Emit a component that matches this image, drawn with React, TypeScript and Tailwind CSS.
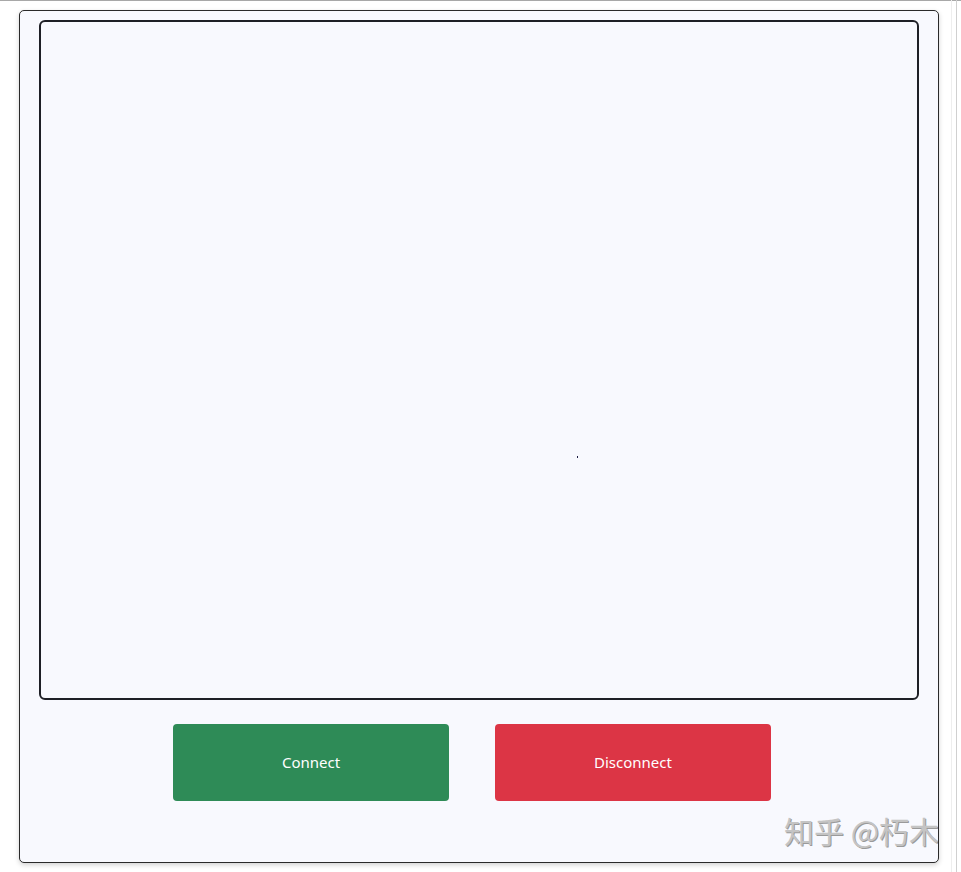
import React from "react";

export default function App() {
  return (
    <div className="relative w-[961px] h-[872px] bg-white overflow-hidden" style={{ fontFamily: '"Noto Sans", "Noto Sans CJK SC", sans-serif' }}>
      <div className="h-px w-full bg-[#a8a8a8]" />
      <div className="absolute right-[4px] top-0 h-full w-px bg-[#d0d0d0]" />
      <div className="absolute right-[9px] top-0 h-full w-px bg-[#eeeeee]" />
      <div className="ml-[19px] mt-[9px] w-[920px] h-[853px] border border-[#2a2a2a] rounded-[5px] bg-[#f8f9fe] shadow-[0_2px_5px_rgba(0,0,0,0.18)] relative overflow-hidden pt-[9px] px-[19px]">
        <div className="relative w-[880px] h-[680px] border-2 border-[#1e1f26] rounded-[6px] bg-[#f8f9fe]">
          <div className="absolute left-[536px] top-[434px] w-px h-[2px] bg-[#1a1a40]" />
        </div>
        <div className="flex mt-[24px] ml-[134px] gap-[46px]">
          <button className="w-[276px] h-[77px] rounded-[4px] bg-[#2e8b57] text-white text-[15px] flex items-center justify-center">
            Connect
          </button>
          <button className="w-[276px] h-[77px] rounded-[4px] bg-[#dc3545] text-white text-[15px] flex items-center justify-center">
            Disconnect
          </button>
        </div>
        <div
          className="absolute left-[764px] top-[804px] text-[30px] leading-none whitespace-nowrap text-[#c4c4c4] tracking-[0px]"
          style={{ fontFamily: '"Noto Sans CJK SC", sans-serif', textShadow: "1px 1px 0 #9a9a9a" }}
        >
          知乎 @朽木
        </div>
      </div>
    </div>
  );
}
